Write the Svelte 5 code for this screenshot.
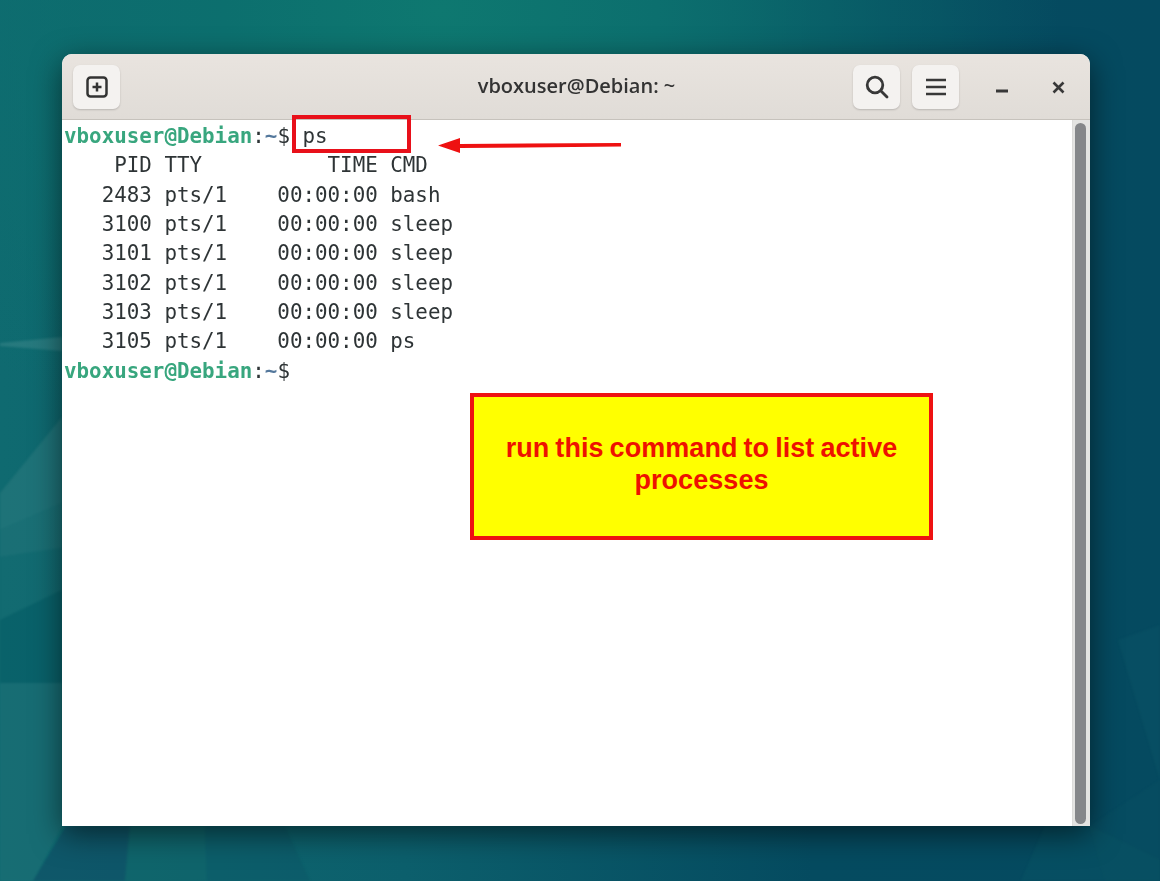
<script>
  const prompt = 'vboxuser@Debian';
  const rows = [
    '    PID TTY          TIME CMD',
    '   2483 pts/1    00:00:00 bash',
    '   3100 pts/1    00:00:00 sleep',
    '   3101 pts/1    00:00:00 sleep',
    '   3102 pts/1    00:00:00 sleep',
    '   3103 pts/1    00:00:00 sleep',
    '   3105 pts/1    00:00:00 ps'
  ];

  // facets of the wallpaper, in page coordinates
  const facets = [
    { points: '0,343 62,337 62,351 0,346', fill: '#4a9194', opacity: 0.4 },
    { points: '0,493 62,417 62,503 0,530', fill: '#3c8488', opacity: 0.35 },
    { points: '0,530 62,503 62,548 0,557', fill: '#2b787d', opacity: 0.4 },
    { points: '0,557 62,548 62,590 0,620', fill: '#1a6e74', opacity: 0.3 },
    { points: '0,620 62,590 62,683 0,683', fill: '#045a64', opacity: 0.5 },
    { points: '0,683 62,683 62,826 33,881 0,881', fill: '#1f6f76', opacity: 0.55 },
    { points: '66,826 130,826 125,881 33,881', fill: '#0f5268', opacity: 0.8 },
    { points: '130,826 205,826 207,881 125,881', fill: '#116468', opacity: 0.45 },
    { points: '205,826 285,826 310,881 207,881', fill: '#0c5666', opacity: 0.45 },
    { points: '1021,881 1045,826 1090,826 1160,860 1160,881', fill: '#0c5a68', opacity: 0.25 },
    { points: '1118,640 1160,625 1160,780', fill: '#0e5a6c', opacity: 0.25 },
    { points: '1090,826 1160,780 1160,881 1105,881', fill: '#0a5564', opacity: 0.25 }
  ];
</script>

<div class="desktop">
  <svg class="wallpaper" viewBox="0 0 1160 881" aria-hidden="true">
    {#each facets as f}
      <polygon points={f.points} fill={f.fill} opacity={f.opacity} />
    {/each}
  </svg>

  <div class="window">
    <header class="titlebar">
      <div class="side">
        <button class="btn" aria-label="New tab">
          <svg width="22" height="22" viewBox="0 0 22 22" fill="none" stroke="#333" stroke-width="2.5">
            <rect x="1.5" y="1.5" width="19" height="19" rx="3" />
            <path d="M11 6.5v9M6.5 11h9" />
          </svg>
        </button>
      </div>
      <div class="title">vboxuser@Debian: ~</div>
      <div class="side right">
        <button class="btn" aria-label="Search">
          <svg width="24" height="24" viewBox="0 0 24 24" fill="none" stroke="#383838" stroke-width="2.8" stroke-linecap="round">
            <circle cx="10" cy="10" r="7.8" />
            <path d="M16 16l6 6" />
          </svg>
        </button>
        <button class="btn" aria-label="Menu">
          <svg width="20" height="18" viewBox="0 0 20 18" fill="none" stroke="#383838" stroke-width="2.6">
            <path d="M0 2h20M0 9h20M0 16h20" />
          </svg>
        </button>
        <button class="ctl min" aria-label="Minimize">
          <svg width="12" height="4" viewBox="0 0 12 4"><rect width="12" height="3" y="0.5" fill="#383838" /></svg>
        </button>
        <button class="ctl" aria-label="Close">
          <svg width="13" height="13" viewBox="0 0 13 13" fill="none" stroke="#383838" stroke-width="2.6">
            <path d="M1.5 1.5l10 10M11.5 1.5l-10 10" />
          </svg>
        </button>
      </div>
    </header>

    <div class="content">
      <div class="terminal">
        <div class="line"><span class="user">{prompt}</span>:<span class="path">~</span>$ ps</div>
        {#each rows as row}
          <div class="line">{row}</div>
        {/each}
        <div class="line"><span class="user">{prompt}</span>:<span class="path">~</span>$</div>

        <div class="cmd-box"></div>
        <svg class="arrow" width="186" height="16" viewBox="0 0 186 16" aria-hidden="true">
          <path d="M1 8.5L23 1v6L184 6v3.5L23 11v5z" fill="#ee1111" />
        </svg>
        <div class="note">run this command to list active processes</div>
      </div>
      <div class="scrollbar"><div class="thumb"></div></div>
    </div>
  </div>
</div>

<style>
  :global(body) {
    margin: 0;
  }

  .desktop {
    position: relative;
    width: 1160px;
    height: 881px;
    overflow: hidden;
    padding: 54px 70px 0 62px;
    box-sizing: border-box;
    background:
      radial-gradient(ellipse 620px 520px at 440px 10px, #0e7870 0%, #0c6f6e 35%, rgba(10, 100, 108, 0) 100%),
      linear-gradient(90deg, #0f6a70 0%, #0c5f6c 35%, #054b60 70%, #054a60 100%);
  }

  .wallpaper {
    position: absolute;
    inset: 0;
    width: 1160px;
    height: 881px;
    filter: blur(1px);
  }

  .window {
    position: relative;
    width: 1028px;
    height: 772px;
    display: flex;
    flex-direction: column;
    border-radius: 10px 10px 0 0;
    overflow: hidden;
    background: #fff;
    box-shadow: 0 8px 30px rgba(0, 0, 0, 0.55);
    filter: blur(0.6px);
  }

  .titlebar {
    flex: none;
    height: 65px;
    display: grid;
    grid-template-columns: 1fr auto 1fr;
    align-items: center;
    padding: 0 10px 0 11px;
    background: linear-gradient(#e9e4df 0%, #e0dcd7 100%);
    border-bottom: 1px solid #c6c2bc;
  }

  .side {
    display: flex;
    align-items: center;
    height: 44px;
    margin-top: 1px;
  }

  .right {
    justify-content: flex-end;
    gap: 12px;
  }

  .btn {
    width: 47px;
    height: 44px;
    padding: 0;
    display: flex;
    align-items: center;
    justify-content: center;
    background: #f4f2f0;
    border: none;
    border-radius: 7px;
    box-shadow: 0 1px 2px rgba(0, 0, 0, 0.18);
  }

  .ctl {
    width: 44px;
    height: 44px;
    padding: 0;
    display: flex;
    align-items: center;
    justify-content: center;
    background: none;
    border: none;
  }

  .min {
    margin-left: 9px;
    padding-top: 8px;
  }

  .title {
    font-family: 'Open Sans', sans-serif;
    font-size: 20px;
    font-weight: 600;
    line-height: 26px;
    margin-bottom: 2px;
    color: #333;
    white-space: pre;
  }

  .content {
    flex: 1;
    display: flex;
    min-height: 0;
  }

  .terminal {
    position: relative;
    flex: 1;
    padding: 2px 0 0 2px;
    font-family: 'DejaVu Sans Mono', monospace;
    font-size: 20.85px;
    color: #2e3436;
  }

  .line {
    height: 29.35px;
    line-height: 29.35px;
    white-space: pre;
  }

  .user {
    color: #38a67e;
    font-weight: 700;
  }

  .path {
    color: #54789c;
    font-weight: 700;
  }

  .cmd-box {
    position: absolute;
    left: 230px;
    top: -5px;
    width: 119px;
    height: 38px;
    box-sizing: border-box;
    border: 4px solid #e8101a;
  }

  .arrow {
    position: absolute;
    left: 375px;
    top: 17px;
  }

  .note {
    position: absolute;
    left: 408px;
    top: 273px;
    width: 463px;
    height: 147px;
    box-sizing: border-box;
    display: flex;
    align-items: center;
    justify-content: center;
    padding: 0 30px 6px;
    text-align: center;
    background: #ffff00;
    border: 4px solid #ee1111;
    font-family: 'Liberation Sans', sans-serif;
    font-size: 27px;
    font-weight: 700;
    line-height: 32px;
    letter-spacing: 0.05px;
    word-spacing: -1.5px;
    color: #ee1100;
  }

  .scrollbar {
    flex: none;
    width: 18px;
    box-sizing: border-box;
    padding: 3px 4px 2px 2px;
    background: #e4e4e2;
    border-left: 1px solid #dcdcda;
  }

  .thumb {
    height: 100%;
    background: #85878a;
    border-radius: 6px;
  }
</style>
